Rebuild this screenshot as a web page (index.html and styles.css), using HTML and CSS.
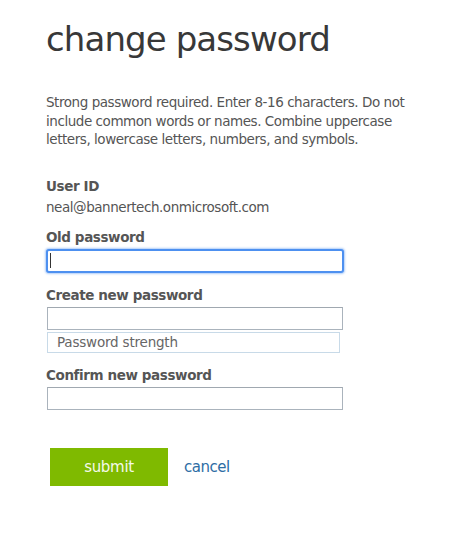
FILE: index.html
```html
<!DOCTYPE html>
<html lang="en">
<head>
<meta charset="utf-8">
<title>change password</title>
<link rel="stylesheet" href="styles.css">
</head>
<body>
<main class="page">
  <h1 class="title">change password</h1>
  <p class="intro">Strong password required. Enter 8-16 characters. Do not<br>include common words or names. Combine uppercase<br>letters, lowercase letters, numbers, and symbols.</p>

  <div class="field field-user">
    <div class="label">User ID</div>
    <div class="value">neal@bannertech.onmicrosoft.com</div>
  </div>

  <div class="field field-old">
    <label class="label" for="old">Old password</label>
    <div class="input input-focus" id="old"><span class="caret"></span></div>
  </div>

  <div class="field field-new">
    <label class="label" for="new">Create new password</label>
    <div class="input" id="new"></div>
    <div class="strength">Password strength</div>
  </div>

  <div class="field field-confirm">
    <label class="label" for="confirm">Confirm new password</label>
    <div class="input" id="confirm"></div>
  </div>

  <div class="actions">
    <button class="submit" type="button">submit</button>
    <a class="cancel" href="#">cancel</a>
  </div>
</main>
</body>
</html>
```
FILE: styles.css
```css
html, body {
  margin: 0;
  padding: 0;
  background: #ffffff;
}

body {
  font-family: "DejaVu Sans", Verdana, sans-serif;
  color: #555555;
}

.page {
  padding: 19px 0 0 46px;
}

.title {
  margin: 0;
  font-size: 34px;
  line-height: 40px;
  font-weight: normal;
  color: #383838;
  letter-spacing: -0.9px;
}

.intro {
  margin: 34px 0 0 0;
  font-size: 13.5px;
  line-height: 18.5px;
  letter-spacing: -0.45px;
  color: #555555;
}

.field {
  display: flex;
  flex-direction: column;
  align-items: flex-start;
}

.label {
  display: block;
  font-size: 13.5px;
  line-height: 18px;
  font-weight: bold;
  color: #555555;
  letter-spacing: -0.4px;
}

.value {
  margin-top: 3px;
  font-size: 13.5px;
  line-height: 18px;
  letter-spacing: -0.45px;
  color: #555555;
}

.field-user { margin-top: 28px; }
.field-old { margin-top: 12px; }
.field-new { margin-top: 13px; }
.field-confirm { margin-top: 13px; }

.input {
  box-sizing: border-box;
  width: 296px;
  height: 23px;
  margin: 3px 0 0 1px;
  border: 1px solid #aab3bc;
  border-top-color: #a0a8b0;
  background: #ffffff;
  display: flex;
  align-items: center;
}

.input-focus {
  width: 298px;
  height: 24px;
  margin: 3px 0 0 0;
  border: 2px solid #4d90f0;
  border-radius: 3px;
  box-shadow: 0 0 2px 1px rgba(77, 144, 240, 0.45);
  padding-left: 2px;
}

.caret {
  display: block;
  width: 1px;
  height: 15px;
  background: #333333;
}

.strength {
  box-sizing: border-box;
  width: 293px;
  height: 21px;
  margin: 2px 0 0 1px;
  border: 1px solid #c8dae8;
  padding-left: 9px;
  font-size: 13.5px;
  line-height: 19px;
  color: #666666;
  letter-spacing: -0.2px;
}

.actions {
  display: flex;
  align-items: center;
  margin-top: 38px;
  margin-left: 4px;
}

.submit {
  width: 118px;
  height: 38px;
  border: none;
  background: #7fba00;
  color: #f4f9ea;
  font-family: "DejaVu Sans", Verdana, sans-serif;
  font-size: 15px;
  letter-spacing: -0.3px;
  padding: 0;
  cursor: pointer;
}

.cancel {
  margin-left: 16px;
  font-size: 15px;
  color: #2e6da4;
  text-decoration: none;
  letter-spacing: -0.5px;
}
```
